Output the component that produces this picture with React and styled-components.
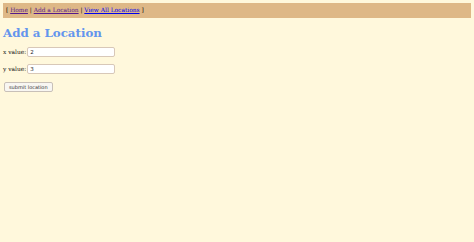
import React from "react";
import styled, { createGlobalStyle } from "styled-components";

const Global = createGlobalStyle`
  html, body { margin: 0; padding: 0; background: #fff8dc; }
  body { padding: 3px; font-family: "DejaVu Serif", serif; font-size: 6px; color: #000; }
`;

const Nav = styled.nav`
  background: #deb887;
  padding: 4px 3px;
  font-size: 5.9px;
  line-height: 7px;
`;

const NavLink = styled.a`
  color: ${(p) => (p.$visited ? "#551a8b" : "#0000ee")};
  text-decoration: underline;
`;

const Title = styled.h1`
  color: #6495ed;
  font-family: "DejaVu Serif", serif;
  font-size: 11.8px;
  line-height: 14px;
  font-weight: bold;
  margin: 8px 0 7px;
`;

const Row = styled.div`
  display: flex;
  align-items: center;
  gap: 1px;
  margin-bottom: 7px;
`;

const Label = styled.label`
  font-size: 5.9px;
  font-weight: normal;
  color: #111;
`;

const Input = styled.input`
  box-sizing: border-box;
  width: 88px;
  height: 10px;
  padding: 0 2px;
  font-size: 5.5px;
  font-family: "DejaVu Sans", sans-serif;
  border: 1px solid #d8c8b8;
  border-radius: 2px;
  background: #fff;
  color: #222;
`;

const Button = styled.button`
  box-sizing: border-box;
  margin: 1px 0 0 1px;
  font-family: "DejaVu Sans", sans-serif;
  font-size: 5px;
  padding: 0 4px;
  height: 10px;
  border: 1px solid #c8c0b8;
  border-radius: 2px;
  background: #f8f6f2;
  color: #333;
`;

export default function App() {
  return (
    <>
      <Global />
      <Nav>
        [ <NavLink $visited href="#">Home</NavLink> | <NavLink $visited href="#">Add a Location</NavLink> |{" "}
        <NavLink href="#">View All Locations</NavLink> ]
      </Nav>
      <Title>Add a Location</Title>
      <Row>
        <Label>x value:</Label>
        <Input defaultValue="2" />
      </Row>
      <Row>
        <Label>y value:</Label>
        <Input defaultValue="3" />
      </Row>
      <Button>submit location</Button>
    </>
  );
}
